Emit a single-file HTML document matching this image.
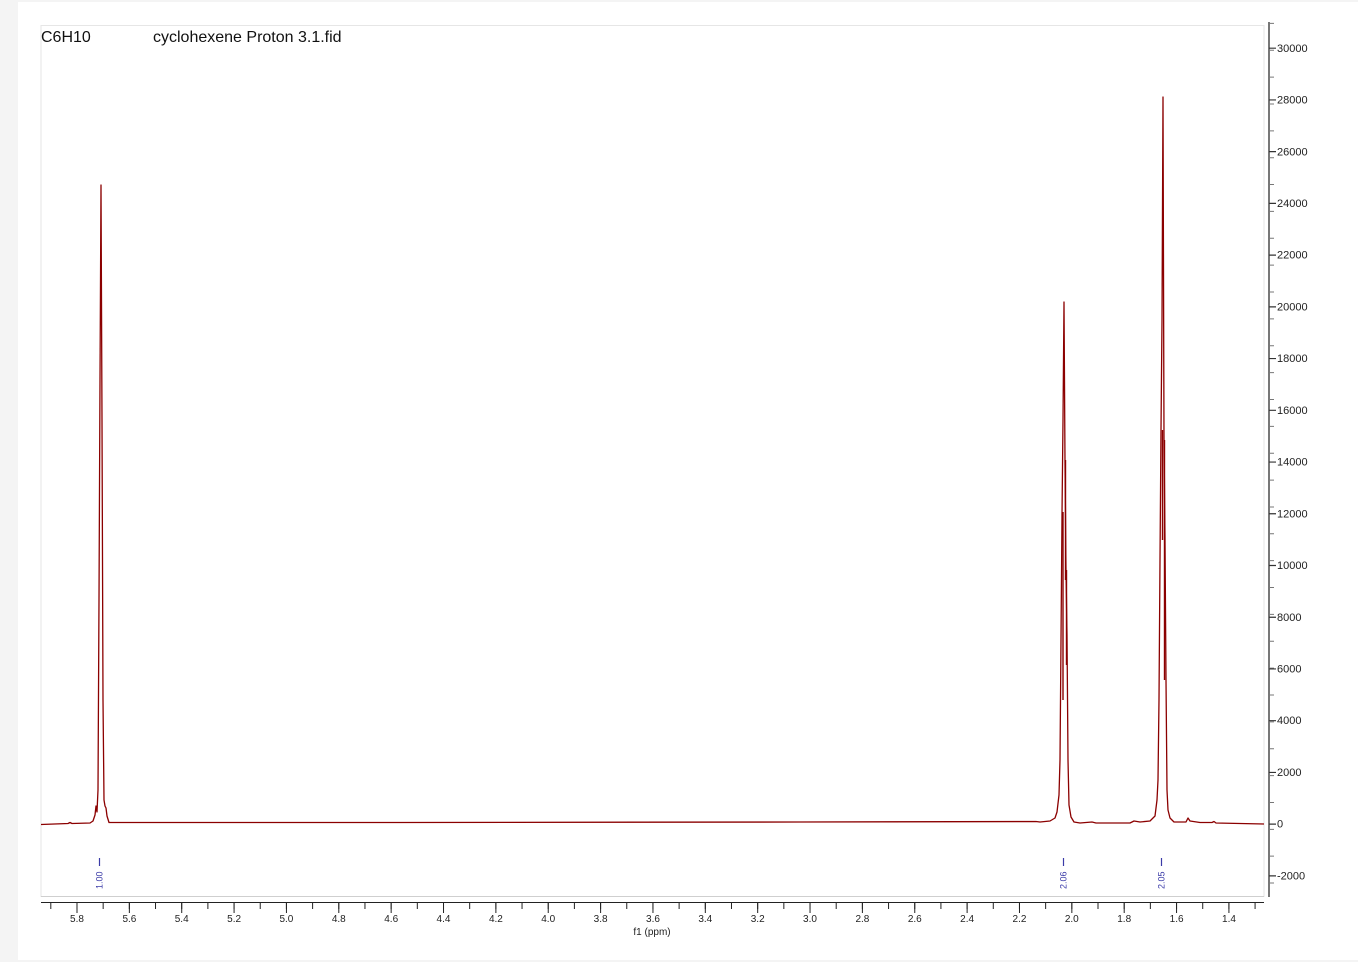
<!DOCTYPE html>
<html><head><meta charset="utf-8"><style>
html,body{margin:0;padding:0;background:#f4f4f4;}
body{width:1358px;height:962px;position:relative;overflow:hidden;font-family:"Liberation Sans",sans-serif;}
#panel{position:absolute;left:18px;top:2px;width:1340px;height:958px;background:#fff;}
svg{position:absolute;left:0;top:0;}
</style></head><body>
<div id="panel"></div>
<svg width="1358" height="962" viewBox="0 0 1358 962" font-family="Liberation Sans, sans-serif">
<rect x="41" y="25.5" width="1223" height="871" fill="none" stroke="#e6e6e6" stroke-width="1"/>
<line x1="41" y1="896.5" x2="1264" y2="896.5" stroke="#cfcfcf"/>
<text x="41" y="42" font-size="16" fill="#111">C6H10</text>
<text x="153" y="42" font-size="16" fill="#111">cyclohexene Proton 3.1.fid</text>
<!-- x axis -->
<line x1="41" y1="902.5" x2="1264" y2="902.5" stroke="#222" stroke-width="1"/>
<line x1="41" y1="906" x2="1264" y2="906" stroke="#222" stroke-width="6" stroke-dasharray="1 25.18" stroke-dashoffset="-9.3"/>
<line x1="41" y1="908" x2="1264" y2="908" stroke="#222" stroke-width="10" stroke-dasharray="1 51.36" stroke-dashoffset="-35.5"/>
<g font-size="10" fill="#222" text-anchor="middle">
<text x="77" y="922">5.8</text><text x="129.4" y="922">5.6</text><text x="181.7" y="922">5.4</text><text x="234.1" y="922">5.2</text><text x="286.4" y="922">5.0</text><text x="338.8" y="922">4.8</text><text x="391.2" y="922">4.6</text><text x="443.5" y="922">4.4</text><text x="495.9" y="922">4.2</text><text x="548.2" y="922">4.0</text><text x="600.6" y="922">3.8</text><text x="653" y="922">3.6</text><text x="705.3" y="922">3.4</text><text x="757.7" y="922">3.2</text><text x="810" y="922">3.0</text><text x="862.4" y="922">2.8</text><text x="914.8" y="922">2.6</text><text x="967.1" y="922">2.4</text><text x="1019.5" y="922">2.2</text><text x="1071.8" y="922">2.0</text><text x="1124.2" y="922">1.8</text><text x="1176.6" y="922">1.6</text><text x="1229" y="922">1.4</text>
<text x="652" y="935">f1 (ppm)</text>
</g>
<!-- y axis -->
<line x1="1269" y1="22" x2="1269" y2="897" stroke="#777" stroke-width="2"/>
<line x1="1272" y1="22" x2="1272" y2="897" stroke="#777" stroke-width="4" stroke-dasharray="1 25.865" stroke-dashoffset="-0.87"/>
<line x1="1272.5" y1="22" x2="1272.5" y2="897" stroke="#333" stroke-width="7" stroke-dasharray="1.2 50.53" stroke-dashoffset="-25.6"/>
<g font-size="11" fill="#222">
<text x="1277" y="52">30000</text><text x="1277" y="103.5">28000</text><text x="1277" y="155.3">26000</text><text x="1277" y="207">24000</text><text x="1277" y="258.7">22000</text><text x="1277" y="310.4">20000</text><text x="1277" y="362.2">18000</text><text x="1277" y="413.9">16000</text><text x="1277" y="465.6">14000</text><text x="1277" y="517.3">12000</text><text x="1277" y="569.1">10000</text><text x="1277" y="620.8">8000</text><text x="1277" y="672.5">6000</text><text x="1277" y="724.2">4000</text><text x="1277" y="776">2000</text><text x="1277" y="827.7">0</text><text x="1277" y="879.4">-2000</text>
</g>
<!-- spectrum -->
<path fill="none" stroke="#8b0000" stroke-width="1.3" stroke-linejoin="round" d="M41 824.5 L68 823.5 L70 822.5 L72 823.5 L90 823 L93 821 L95 815 L96 806 L97 812 L98 790 L99 600 L100 380 L101 185 L102 420 L103 700 L104 800 L105 806 L106 808 L107 816 L109 822.5 L400 822.5 L800 822 L1036 821.5 L1040 822 L1050 821 L1055 818 L1057 812 L1059 795 L1060 760 L1061 640 L1062 515 L1063 420 L1064 302 L1065 462 L1066 570 L1067 635 L1068 760 L1069 805 L1071 817 L1074 822 L1080 823 L1092 822 L1096 823 L1130 823 L1134 821 L1140 822 L1150 821 L1155 816 L1157 800 L1158 780 L1159 700 L1160 560 L1161 430 L1162 320 L1163 97 L1164 440 L1165 540 L1166 680 L1167 790 L1168 810 L1170 818 L1174 822 L1186 822 L1188 818 L1190 821 L1200 822.5 L1212 822.5 L1214 821.5 L1216 823 L1264 824"/>
<path fill="none" stroke="#8b0000" stroke-width="1.4" d="M1162.5 430 L1162.5 540 M1164.5 440 L1164.5 680 M1065.5 460 L1065.5 580 M1066.5 570 L1066.5 665 M1063 512 L1063 700"/>
<!-- integrals -->
<g fill="#3b3ba8" font-size="9">
<line x1="99.5" y1="858" x2="99.5" y2="866" stroke="#3b3ba8" stroke-width="1.2"/>
<text transform="translate(102.5,889) rotate(-90)">1.00</text>
<line x1="1063.5" y1="858" x2="1063.5" y2="866" stroke="#3b3ba8" stroke-width="1.2"/>
<text transform="translate(1066.5,889) rotate(-90)">2.06</text>
<line x1="1161.5" y1="858" x2="1161.5" y2="866" stroke="#3b3ba8" stroke-width="1.2"/>
<text transform="translate(1164.5,889) rotate(-90)">2.05</text>
</g>
</svg>
</body></html>
